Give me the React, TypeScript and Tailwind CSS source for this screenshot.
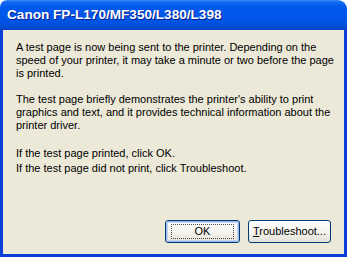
import React from "react";

const bodyFont = { fontFamily: '"Liberation Sans", Arial, sans-serif' };

function XpButton({
  children,
  isDefault,
  width,
}: {
  children: React.ReactNode;
  isDefault?: boolean;
  width: string;
}) {
  return (
    <button
      className={`${width} h-[23px] rounded-[3px] border border-[#003c74] bg-gradient-to-b from-white via-[#f5f4ef] to-[#e3e1d6] p-0 text-[11px] text-black`}
      style={bodyFont}
    >
      <div
        className={
          isDefault
            ? "flex h-full w-full items-center justify-center rounded-[2px] border border-[#9ab6e8] shadow-[inset_0_0_0_1px_#c4d6f3]"
            : "flex h-full w-full items-center justify-center rounded-[2px] border border-transparent"
        }
      >
        {isDefault ? (
          <span className="flex h-[15px] w-[63px] items-center justify-center border border-dotted border-black/70">
            {children}
          </span>
        ) : (
          <span>{children}</span>
        )}
      </div>
    </button>
  );
}

export default function App() {
  return (
    <div className="h-[260px] w-[347px] overflow-hidden bg-white">
      <div className="flex h-[257px] w-[347px] flex-col overflow-hidden rounded-tl-[7px] rounded-tr-[9px]">
        {/* Title bar */}
        <div className="flex h-[30px] shrink-0 items-center bg-[linear-gradient(to_bottom,#3b8cf7_0%,#1068f0_8%,#0058ee_25%,#0056e8_60%,#0150dc_85%,#0a46c8_100%)] pl-[7px] pt-[1px]">
          <span
            className="text-[13.6px] font-bold text-white [text-shadow:1px_1px_0_#0a1e8c]"
            style={{ fontFamily: '"Liberation Sans", Arial, sans-serif' }}
          >
            Canon FP-L170/MF350/L380/L398
          </span>
        </div>

        {/* Body */}
        <div
          className="flex flex-1 flex-col border-x-[3px] border-b-[3px] border-[#0a3fd8] bg-[#ece9d8] px-[13px] pb-[11px] pt-[11px] text-[11px] leading-[13px] text-black"
          style={bodyFont}
        >
          <p className="whitespace-nowrap">
            A test page is now being sent to the printer. Depending on the
            <br />
            speed of your printer, it may take a minute or two before the page
            <br />
            is printed.
          </p>
          <p className="mt-[13px] whitespace-nowrap">
            The test page briefly demonstrates the printer's ability to print
            <br />
            graphics and text, and it provides technical information about the
            <br />
            printer driver.
          </p>
          <p className="mt-[15px] whitespace-nowrap">
            If the test page printed, click OK.
          </p>
          <p className="mt-[2px] whitespace-nowrap">
            If the test page did not print, click Troubleshoot.
          </p>

          <div className="mt-auto flex justify-end gap-[8px]">
            <XpButton isDefault width="w-[75px]">
              OK
            </XpButton>
            <XpButton width="w-[83px]">
              <span className="underline">T</span>roubleshoot...
            </XpButton>
          </div>
        </div>
      </div>
    </div>
  );
}
